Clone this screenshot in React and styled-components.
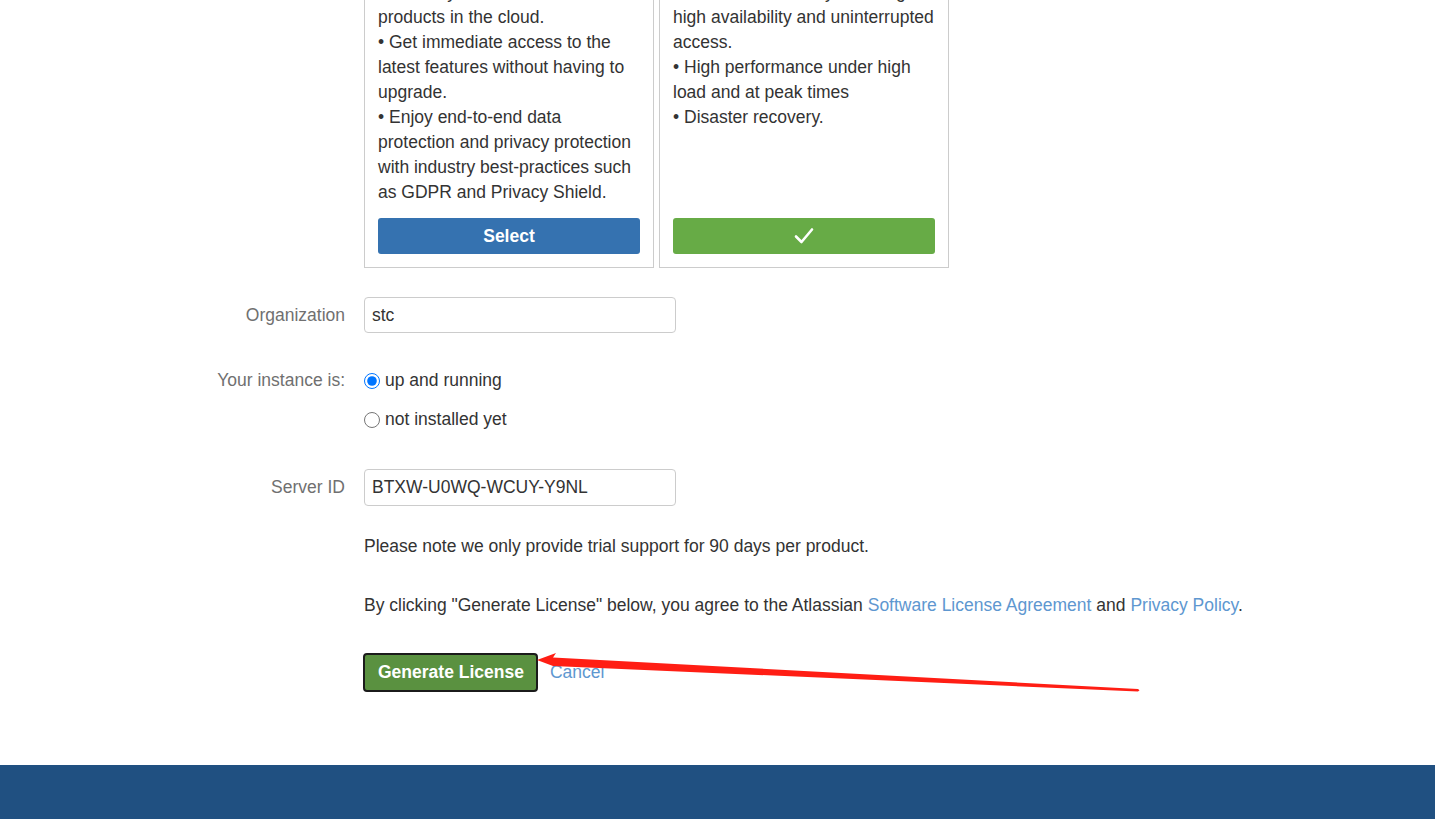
import React from "react";
import styled, { createGlobalStyle } from "styled-components";

const Global = createGlobalStyle`
  html, body { margin: 0; padding: 0; background: #fff; overflow: hidden; }
  body { font-family: "Liberation Sans", Arial, sans-serif; font-size: 17.5px; line-height: 25px; color: #333; }
  * { box-sizing: border-box; }
`;

const Page = styled.div`
  position: relative;
  margin-top: -34px;
  min-height: 900px;
`;

const Form = styled.div`
  padding-left: 145px;
`;

const Row = styled.div`
  display: flex;
  align-items: ${(p) => p.$align || "center"};
  gap: 19px;
  margin-top: ${(p) => p.$top || 0}px;
`;

const Label = styled.label`
  width: 200px;
  flex: none;
  text-align: right;
  color: #707070;
  line-height: 25px;
`;

const Field = styled.div`
  display: flex;
  flex-direction: ${(p) => (p.$column ? "column" : "row")};
  align-items: ${(p) => (p.$column ? "flex-start" : "center")};
  gap: ${(p) => p.$gap || 0}px;
`;

const Cards = styled.div`
  display: flex;
  gap: 5px;
  align-items: stretch;
`;

const Card = styled.div`
  width: 290px;
  border: 1px solid #ccc;
  padding: 13px;
  display: flex;
  flex-direction: column;
`;

const Bullet = styled.p`
  margin: 0;
`;

const CardButton = styled.button`
  margin-top: auto;
  height: 36px;
  width: 100%;
  border: none;
  border-radius: 3px;
  background: ${(p) => p.$bg};
  color: #fff;
  font-family: "Liberation Sans", Arial, sans-serif;
  font-weight: bold;
  font-size: 17.5px;
  display: flex;
  align-items: center;
  justify-content: center;
  cursor: pointer;
`;

const ButtonSpacer = styled.div`
  height: 13px;
  flex: none;
`;

const Input = styled.input`
  width: 312px;
  height: ${(p) => p.$h || 36}px;
  border: 1px solid #ccc;
  border-radius: 4px;
  padding: 0 7px;
  font-family: "Liberation Sans", Arial, sans-serif;
  font-size: 17.5px;
  color: #333;
  background: #fff;
  outline: none;
`;

const RadioLine = styled.label`
  display: flex;
  align-items: center;
  line-height: 25px;
  color: #333;
`;

const Radio = styled.input`
  width: 16px;
  height: 16px;
  margin: 0 5px 0 0;
`;

const Text = styled.p`
  margin: ${(p) => p.$top || 0}px 0 0 364px;
  line-height: 25px;
`;

const Link = styled.a`
  color: #5e97d0;
  text-decoration: none;
`;

const Actions = styled.div`
  display: flex;
  align-items: center;
  gap: 12px;
  margin: 35px 0 0 363px;
`;

const PrimaryButton = styled.button`
  height: 39px;
  padding: 0 12px 0 13px;
  border: 2px solid #1b1b1b;
  border-radius: 4px;
  background: #5a9140;
  color: #fff;
  font-family: "Liberation Sans", Arial, sans-serif;
  font-weight: bold;
  font-size: 17.5px;
  cursor: pointer;
`;

const Footer = styled.footer`
  margin-top: 73px;
  height: 120px;
  background: #205081;
`;

const Arrow = styled.svg`
  position: absolute;
  left: 0;
  top: 34px;
  pointer-events: none;
`;

function Check() {
  return (
    <svg width="20" height="18" viewBox="0 0 20 18" fill="none">
      <polyline points="2,9.5 7.5,15 18,2.5" stroke="#fff" strokeWidth="2.6" strokeLinecap="round" strokeLinejoin="round" />
    </svg>
  );
}

export default function App() {
  return (
    <>
      <Global />
      <Page>
        <Form>
          <Row $align="stretch">
            <Label />
            <Cards>
              <Card>
                <Bullet>
                  • Use fully hosted Atlassian
                  <br />
                  products in the cloud.
                </Bullet>
                <Bullet>• Get immediate access to the latest features without having to upgrade.</Bullet>
                <Bullet>• Enjoy end-to-end data protection and privacy protection with industry best-practices such as GDPR and Privacy Shield.</Bullet>
                <ButtonSpacer />
                <CardButton $bg="#3572b0">Select</CardButton>
              </Card>
              <Card>
                <Bullet>
                  • Built-in redundancy ensuring
                  <br />
                  high availability and uninterrupted access.
                </Bullet>
                <Bullet>• High performance under high load and at peak times</Bullet>
                <Bullet>• Disaster recovery.</Bullet>
                <ButtonSpacer />
                <CardButton $bg="#67ab46" aria-label="Selected">
                  <Check />
                </CardButton>
              </Card>
            </Cards>
          </Row>

          <Row $top={29}>
            <Label>Organization</Label>
            <Input defaultValue="stc" />
          </Row>

          <Row $top={35} $align="flex-start">
            <Label>Your instance is:</Label>
            <Field $column $gap={14}>
              <RadioLine>
                <Radio type="radio" name="inst" defaultChecked />
                up and running
              </RadioLine>
              <RadioLine>
                <Radio type="radio" name="inst" />
                not installed yet
              </RadioLine>
            </Field>
          </Row>

          <Row $top={37}>
            <Label>Server ID</Label>
            <Input $h={37} defaultValue="BTXW-U0WQ-WCUY-Y9NL" />
          </Row>
        </Form>

        <Text $top={28}>Please note we only provide trial support for 90 days per product.</Text>
        <Text $top={34}>
          By clicking "Generate License" below, you agree to the Atlassian <Link href="#">Software License Agreement</Link> and{" "}
          <Link href="#">Privacy Policy</Link>.
        </Text>

        <Actions>
          <PrimaryButton>Generate License</PrimaryButton>
          <Link href="#">Cancel</Link>
        </Actions>

        <Footer />

        <Arrow width="1435" height="819" viewBox="0 0 1435 819">
          <polygon
            points="537,660 556,653 553,657.5 1138,689 1139.5,690.3 1138,691.5 553,666"
            fill="#ff1e14"
          />
        </Arrow>
      </Page>
    </>
  );
}
